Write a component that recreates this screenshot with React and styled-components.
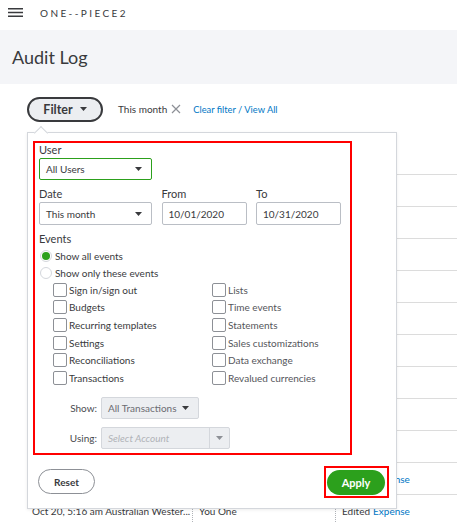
import * as React from "react";
import styled, { createGlobalStyle } from "styled-components";

const COLOR = {
  ink: "#393a3d",
  soft: "#6b6c72",
  line: "#d4d7dc",
  green: "#2ca01c",
  blue: "#0077c5",
  red: "#ff0000",
};

const GlobalStyle = createGlobalStyle`
  html, body { margin: 0; padding: 0; background: #fff; }
  body {
    font-family: Lato, "Open Sans", Arial, sans-serif;
    color: ${COLOR.ink};
    overflow: hidden;
  }
  * { box-sizing: border-box; }
`;

const leftEvents = [
  "Sign in/sign out",
  "Budgets",
  "Recurring templates",
  "Settings",
  "Reconciliations",
  "Transactions",
];

const rightEvents = [
  "Lists",
  "Time events",
  "Statements",
  "Sales customizations",
  "Data exchange",
  "Revalued currencies",
];

// rows under the open filter panel; only the last ones peek out
const rows = [
  {}, {}, {}, {}, {}, {}, {}, {}, {},
  { event: "Edited", link: "Expense" },
  {
    date: "Oct 20, 5:16 am Australian Wester...",
    user: "You One",
    event: "Edited",
    link: "Expense",
  },
];

const Caret = ({ color = COLOR.ink }) => (
  <svg width="7" height="4" viewBox="0 0 7 4">
    <path d="M0 0 L7 0 L3.5 4 Z" fill={color} />
  </svg>
);

const Select = ({ value, focus, muted, placeholder, split, width }) => (
  <SelectBox $focus={focus} $muted={muted} $width={width}>
    <SelectText $placeholder={placeholder}>{value}</SelectText>
    {split ? (
      <SplitCaret>
        <Caret color="#8d9096" />
      </SplitCaret>
    ) : (
      <Caret />
    )}
  </SelectBox>
);

const Check = ({ label, light }) => (
  <CheckRow>
    <CheckBox />
    <CheckLabel $light={light}>{label}</CheckLabel>
  </CheckRow>
);

const App = () => {
  return (
    <Page>
      <GlobalStyle />
      <TopBar>
        <svg width="15" height="9" viewBox="0 0 15 9">
          <path d="M0 0.75H15M0 4.5H15M0 8.25H15" stroke={COLOR.ink} strokeWidth="1.5" />
        </svg>
        <Brand>ONE--PIECE2</Brand>
      </TopBar>
      <Header>Audit Log</Header>

      <Toolbar>
        <FilterButton>
          Filter
          <Caret />
        </FilterButton>
        <Chip>This month</Chip>
        <svg width="10" height="10" viewBox="0 0 10 10" style={{ marginLeft: 4 }}>
          <path d="M1 1L9 9M9 1L1 9" stroke="#8d9096" strokeWidth="1.2" />
        </svg>
        <ClearLink>Clear filter / View All</ClearLink>

        <Popover>
          <RedBox>
            <Label>User</Label>
            <Select value="All Users" focus width={113} />

            <DateGrid>
              <Label>Date</Label>
              <Label>From</Label>
              <Label>To</Label>
              <Select value="This month" width={113} />
              <DateInput>10/01/2020</DateInput>
              <DateInput>10/31/2020</DateInput>
            </DateGrid>

            <Label $top={7}>Events</Label>
            <RadioRow>
              <Radio $on />
              <RadioLabel>Show all events</RadioLabel>
            </RadioRow>
            <RadioRow>
              <Radio />
              <RadioLabel>Show only these events</RadioLabel>
            </RadioRow>

            <CheckGrid>
              {leftEvents.map((l, i) => (
                <React.Fragment key={l}>
                  <Check label={l} />
                  <Check label={rightEvents[i]} light />
                </React.Fragment>
              ))}
            </CheckGrid>

            <InlineField $top={10}>
              <InlineLabel>Show:</InlineLabel>
              <Select value="All Transactions" muted width={98} />
            </InlineField>
            <InlineField $top={8}>
              <InlineLabel>Using:</InlineLabel>
              <Select value="Select Account" muted placeholder split width={129} />
            </InlineField>
          </RedBox>

          <Footer>
            <ResetButton>Reset</ResetButton>
            <ApplyFrame>
              <ApplyButton>Apply</ApplyButton>
            </ApplyFrame>
          </Footer>
        </Popover>
      </Toolbar>

      <Table>
        <HeadRow />
        {rows.map((r, i) => (
          <Row key={i}>
            <Cell $w={165}>{r.date}</Cell>
            <Cell $w={143} $sep>
              {r.user}
            </Cell>
            <Cell $sep>
              {r.event} {r.link && <Link>{r.link}</Link>}
            </Cell>
          </Row>
        ))}
      </Table>
    </Page>
  );
};

const Page = styled.div`
  width: 457px;
  height: 522px;
  overflow: hidden;
`;

const TopBar = styled.div`
  height: 30px;
  display: flex;
  align-items: flex-start;
  padding: 8px 0 0 8px;
`;

const Brand = styled.div`
  margin-left: 17px;
  margin-top: -1px;
  font-size: 10px;
  line-height: 12px;
  letter-spacing: 2.4px;
  color: ${COLOR.ink};
`;

const Header = styled.div`
  height: 54px;
  background: #f4f5f8;
  display: flex;
  align-items: center;
  padding-left: 12px;
  font-size: 18px;
  color: ${COLOR.ink};
`;

const Toolbar = styled.div`
  position: relative;
  margin-top: 12px;
  height: 26px;
  display: flex;
  align-items: center;
  padding-left: 27px;
`;

const FilterButton = styled.div`
  width: 76px;
  height: 25px;
  border: 2px solid ${COLOR.ink};
  border-radius: 13px;
  background: #eceef1;
  display: flex;
  align-items: center;
  justify-content: center;
  gap: 7px;
  font-size: 12.5px;
  font-weight: 700;
  color: ${COLOR.ink};
`;

const Chip = styled.span`
  margin-left: 15px;
  font-size: 10px;
  color: ${COLOR.ink};
`;

const ClearLink = styled.span`
  margin-left: 12px;
  font-size: 9.3px;
  color: ${COLOR.blue};
`;

const Popover = styled.div`
  position: absolute;
  z-index: 2;
  top: 36px;
  left: 27px;
  width: 370px;
  background: #fff;
  border: 1px solid ${COLOR.line};
  box-shadow: 0 1px 3px rgba(0, 0, 0, 0.08);
  padding: 8px 0 10px 5px;

  &::before {
    content: "";
    position: absolute;
    top: -5.5px;
    left: 7.5px;
    width: 9px;
    height: 9px;
    background: #fff;
    border-left: 1px solid ${COLOR.line};
    border-top: 1px solid ${COLOR.line};
    transform: rotate(45deg);
  }
`;

const RedBox = styled.div`
  width: 319px;
  border: 2px solid ${COLOR.red};
  padding: 0 4px 4px 4px;
  display: flex;
  flex-direction: column;
  align-items: flex-start;
`;

const Label = styled.div`
  font-size: 11px;
  line-height: 13px;
  color: ${COLOR.ink};
  margin-top: ${(p) => p.$top || 0}px;
  margin-bottom: 2px;
`;

const SelectBox = styled.div`
  width: ${(p) => p.$width}px;
  height: 22px;
  display: flex;
  align-items: center;
  justify-content: space-between;
  padding: 0 9px 0 6px;
  border: 1px solid ${(p) => (p.$focus ? COLOR.green : p.$muted ? COLOR.line : "#babec5")};
  border-radius: 2px;
  background: ${(p) => (p.$muted ? "#eceef1" : "#fff")};
  font-size: 10px;
  color: ${(p) => (p.$muted ? COLOR.soft : COLOR.ink)};
`;

const SelectText = styled.span`
  font-style: ${(p) => (p.$placeholder ? "italic" : "normal")};
  color: ${(p) => (p.$placeholder ? "#b0b3b8" : "inherit")};
`;

const SplitCaret = styled.span`
  align-self: stretch;
  width: 20px;
  margin-right: -9px;
  border-left: 1px solid ${COLOR.line};
  display: flex;
  align-items: center;
  justify-content: center;
`;

const DateGrid = styled.div`
  margin-top: 7px;
  display: grid;
  grid-template-columns: 113px 85px 85px;
  column-gap: 9.5px;
  align-items: end;

  & > ${SelectBox} {
    height: 23px;
  }
`;

const DateInput = styled.div`
  height: 23px;
  border: 1px solid #babec5;
  border-radius: 2px;
  display: flex;
  align-items: center;
  padding-left: 6px;
  font-size: 10px;
  color: ${COLOR.ink};
`;

const RadioRow = styled.div`
  height: 17px;
  display: flex;
  align-items: center;
  gap: 3px;
  padding-left: 1px;
`;

const Radio = styled.span`
  width: 12px;
  height: 12px;
  border-radius: 50%;
  border: 1px solid #d4d7dc;
  background: #fff;
  display: flex;
  align-items: center;
  justify-content: center;

  &::after {
    content: "";
    width: 8px;
    height: 8px;
    border-radius: 50%;
    background: ${(p) => (p.$on ? COLOR.green : "transparent")};
  }
`;

const RadioLabel = styled.span`
  font-size: 10px;
  color: ${COLOR.ink};
`;

const CheckGrid = styled.div`
  margin-left: 14px;
  display: grid;
  grid-template-columns: 159px auto;
  grid-auto-rows: 17.6px;
`;

const CheckRow = styled.div`
  display: flex;
  align-items: center;
  gap: 2px;
`;

const CheckBox = styled.span`
  width: 14px;
  height: 14px;
  border: 1px solid #8d9096;
  border-radius: 2px;
  background: #fff;
`;

const CheckLabel = styled.span`
  font-size: 10px;
  color: ${(p) => (p.$light ? "#55565b" : COLOR.ink)};
`;

const InlineField = styled.div`
  margin-top: ${(p) => p.$top}px;
  display: flex;
  align-items: center;
  gap: 4px;
`;

const InlineLabel = styled.span`
  width: 58px;
  text-align: right;
  font-size: 10px;
  color: #4a4b50;
`;

const Footer = styled.div`
  width: 356px;
  margin-top: 11px;
  padding-left: 5px;
  display: flex;
  justify-content: space-between;
  align-items: center;
`;

const ResetButton = styled.div`
  width: 57px;
  height: 25px;
  border: 1px solid #8d9096;
  border-radius: 13px;
  display: flex;
  align-items: center;
  justify-content: center;
  font-size: 10px;
  font-weight: 700;
  color: ${COLOR.ink};
`;

const ApplyFrame = styled.div`
  border: 2px solid ${COLOR.red};
  padding: 2px 2px 1px 1px;
`;

const ApplyButton = styled.div`
  width: 58px;
  height: 25px;
  border-radius: 13px;
  background: ${COLOR.green};
  color: #fff;
  font-size: 11px;
  font-weight: 700;
  display: flex;
  align-items: center;
  justify-content: center;
`;

const Table = styled.div`
  margin-top: 21px;
  margin-left: 27px;
`;

const HeadRow = styled.div`
  height: 32px;
  border-bottom: 1px solid #dcdcdc;
`;

const Row = styled.div`
  height: 32px;
  display: flex;
  border-bottom: 1px solid #dcdcdc;
  font-size: 10px;
  color: ${COLOR.ink};
`;

const Cell = styled.div`
  ${(p) => (p.$w ? `width: ${p.$w}px;` : "flex: 1;")}
  display: flex;
  align-items: center;
  gap: 3px;
  padding-left: ${(p) => (p.$sep ? 6 : 5)}px;
  border-left: ${(p) => (p.$sep ? "1px dotted #b0b3b8" : "none")};
  white-space: nowrap;
`;

const Link = styled.span`
  color: ${COLOR.blue};
`;

export default App;
